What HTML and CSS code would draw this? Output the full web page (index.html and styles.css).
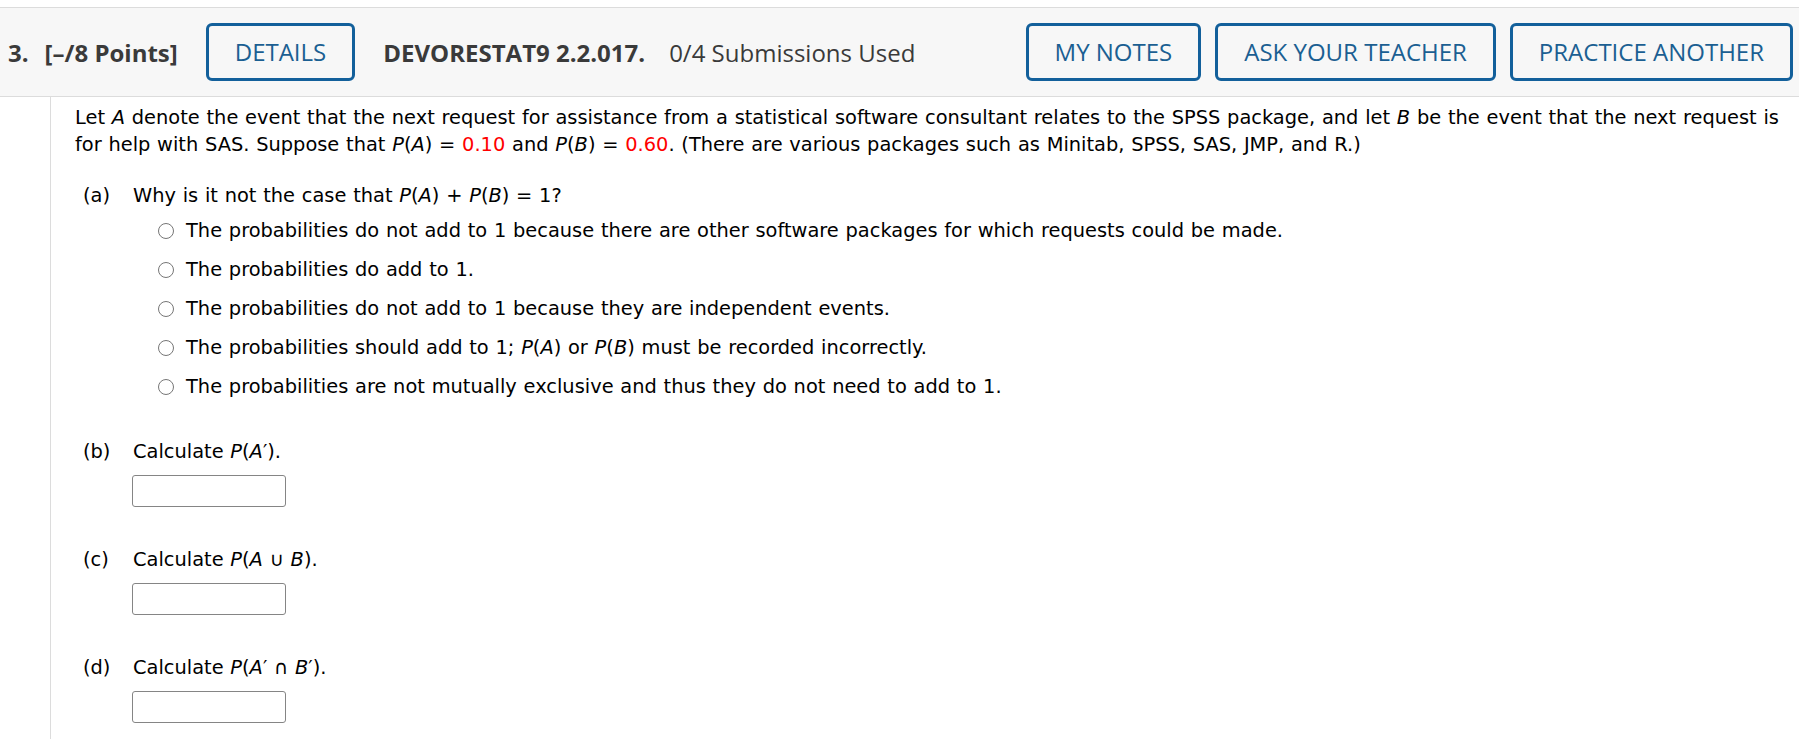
FILE: index.html
```html
<!DOCTYPE html>
<html lang="en">
<head>
<meta charset="utf-8">
<title>Question 3</title>
<link rel="stylesheet" href="styles.css">
</head>
<body>
<div class="question">
  <div class="qhead">
    <span class="qnum">3.</span>
    <span class="qpts">[–/8 Points]</span>
    <button class="btn btn-details" type="button">DETAILS</button>
    <span class="qid">DEVORESTAT9 2.2.017.</span>
    <span class="subs">0/4 Submissions Used</span>
    <div class="actions">
      <button class="btn" type="button">MY NOTES</button>
      <button class="btn" type="button">ASK YOUR TEACHER</button>
      <button class="btn" type="button">PRACTICE ANOTHER</button>
    </div>
  </div>
  <div class="qbody">
    <p class="stem">Let <i>A</i> denote the event that the next request for assistance from a statistical software consultant relates to the SPSS package, and let <i>B</i> be the event that the next request is for help with SAS. Suppose that <i>P</i>(<i>A</i>) = <span class="red">0.10</span> and <i>P</i>(<i>B</i>) = <span class="red">0.60</span>. (There are various packages such as Minitab, SPSS, SAS, JMP, and R.)</p>
    <div class="parts">
      <div class="part part-a">
        <span class="plabel">(a)</span>
        <div class="pcontent">
          <div class="prompt">Why is it not the case that <i>P</i>(<i>A</i>) + <i>P</i>(<i>B</i>) = 1?</div>
          <ul class="opts">
            <li><span class="radio"></span><span class="otext">The probabilities do not add to 1 because there are other software packages for which requests could be made.</span></li>
            <li><span class="radio"></span><span class="otext">The probabilities do add to 1.</span></li>
            <li><span class="radio"></span><span class="otext">The probabilities do not add to 1 because they are independent events.</span></li>
            <li><span class="radio"></span><span class="otext">The probabilities should add to 1; <i>P</i>(<i>A</i>) or <i>P</i>(<i>B</i>) must be recorded incorrectly.</span></li>
            <li><span class="radio"></span><span class="otext">The probabilities are not mutually exclusive and thus they do not need to add to 1.</span></li>
          </ul>
        </div>
      </div>
      <div class="part">
        <span class="plabel">(b)</span>
        <div class="pcontent">
          <div class="prompt">Calculate <i>P</i>(<i>A</i><span class="prime">′</span>).</div>
          <div class="answer"></div>
        </div>
      </div>
      <div class="part">
        <span class="plabel">(c)</span>
        <div class="pcontent">
          <div class="prompt">Calculate <i>P</i>(<i>A</i> <span class="setop">∪</span> <i>B</i>).</div>
          <div class="answer"></div>
        </div>
      </div>
      <div class="part">
        <span class="plabel">(d)</span>
        <div class="pcontent">
          <div class="prompt">Calculate <i>P</i>(<i>A</i><span class="prime">′</span> <span class="setop">∩</span> <i>B</i><span class="prime">′</span>).</div>
          <div class="answer"></div>
        </div>
      </div>
    </div>
  </div>
</div>
</body>
</html>
```
FILE: styles.css
```css
html, body {
  margin: 0;
  padding: 0;
  background: #ffffff;
}
body {
  height: 739px;
  overflow: hidden;
}
.question {
  margin-top: 7px;
  height: 732px;
  display: flex;
  flex-direction: column;
}
.qhead {
  flex: none;
  display: flex;
  align-items: center;
  height: 88px;
  background: #f7f7f7;
  border-top: 1px solid #dcdcdc;
  border-bottom: 1px solid #dcdcdc;
  padding: 0 6px 0 8px;
  font-family: "Open Sans", "Liberation Sans", sans-serif;
  font-size: 24px;
  color: #3a3a3a;
}
.qnum {
  font-weight: 700;
  margin-right: 16px;
}
.qpts {
  font-weight: 700;
  margin-right: 28px;
}
.qid {
  font-weight: 700;
  margin-left: 28px;
  margin-right: 24px;
}
.subs {
  font-weight: 400;
  color: #3a3a3a;
}
.actions {
  margin-left: auto;
  display: flex;
  gap: 14px;
}
.btn {
  font-family: "Open Sans", "Liberation Sans", sans-serif;
  font-size: 24px;
  font-weight: 500;
  color: #1b5f92;
  background: #f7f7f7;
  border: 3px solid #13609b;
  border-radius: 6px;
  height: 58px;
  padding: 0 26px;
  line-height: 1;
  cursor: pointer;
}
.qbody {
  flex: 1;
  min-height: 0;
  margin-left: 50px;
  border-left: 1px solid #dcdcdc;
  padding: 7px 0 0 24px;
  font-family: "DejaVu Sans", Verdana, sans-serif;
  font-size: 19.4px;
  line-height: 27px;
  color: #000000;
}
.stem {
  margin: 0;
  word-spacing: 0.6px;
}
.red {
  color: #ff0000;
}
i {
  font-style: italic;
}
.prime {
  font-style: normal;
}
.parts {
  margin-left: 8px;
  margin-top: 24px;
}
.part {
  display: flex;
}
.plabel {
  width: 50px;
  flex: none;
  line-height: 27px;
}
.pcontent {
  flex: 1;
}
.prompt {
  line-height: 27px;
  word-spacing: 0.6px;
}
.opts {
  list-style: none;
  margin: 0;
  padding: 0 0 0 25px;
}
.opts li {
  display: flex;
  align-items: center;
  height: 39px;
}
.otext {
  word-spacing: 0.6px;
}
.opts li:first-child {
  margin-top: 2px;
}
.radio {
  width: 16px;
  height: 16px;
  box-sizing: border-box;
  border: 1px solid #767676;
  border-radius: 50%;
  background: #ffffff;
  margin-right: 12px;
  flex: none;
}
.part-a {
  margin-bottom: 32px;
}
.answer {
  width: 154px;
  height: 32px;
  box-sizing: border-box;
  border: 1px solid #858585;
  border-radius: 3px;
  background: #ffffff;
  margin-left: -1px;
  margin-top: 10px;
  margin-bottom: 39px;
}
.part:last-child .answer {
  margin-bottom: 0;
}
```
